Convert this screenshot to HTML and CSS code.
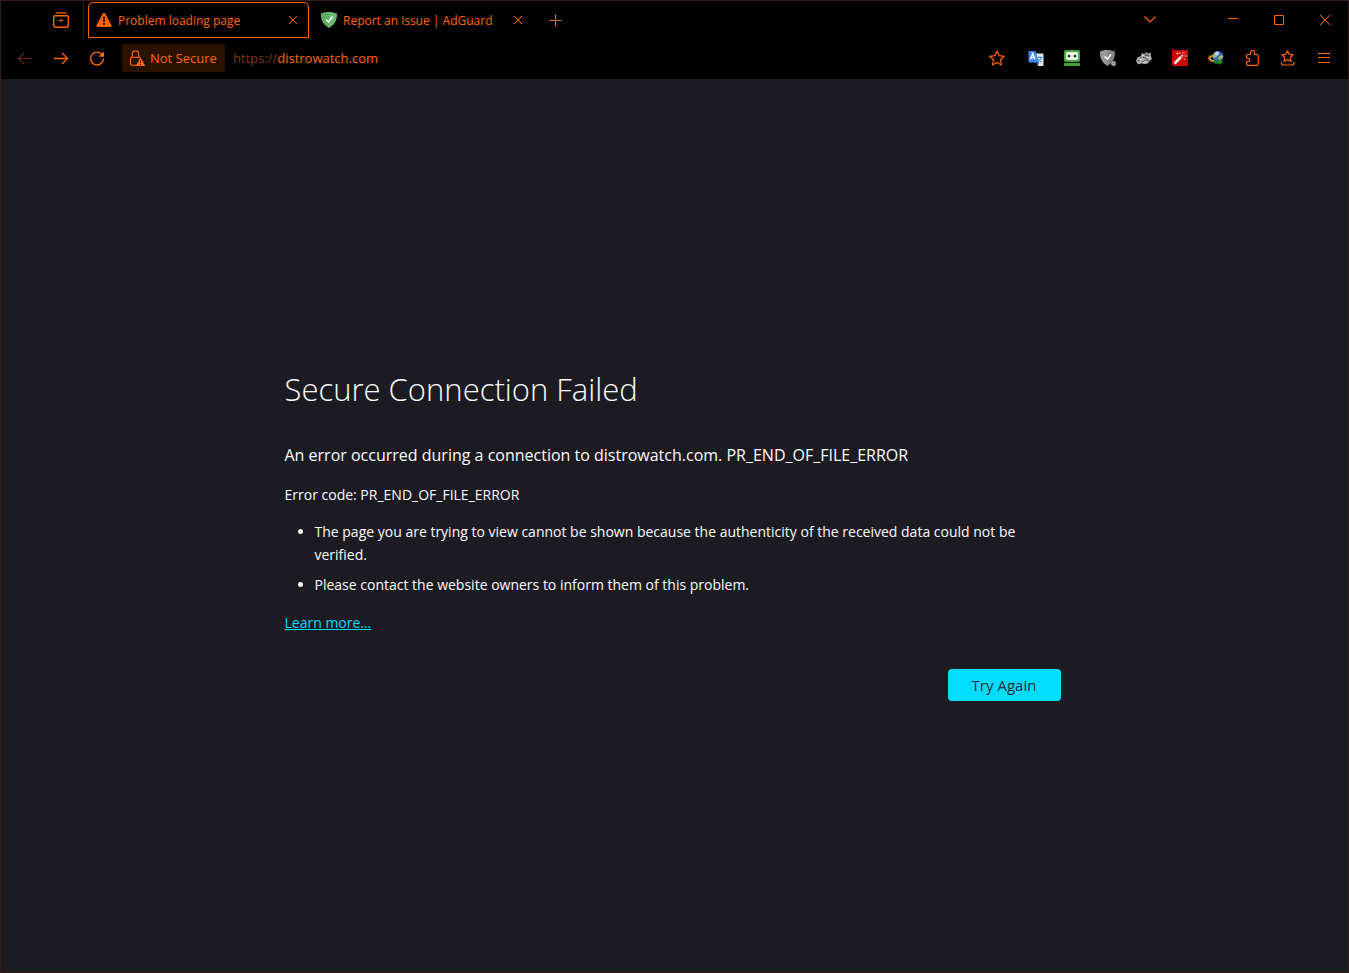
FILE: index.html
```html
<!DOCTYPE html>
<html lang="en">
<head>
    <meta charset="UTF-8">
    <meta name="viewport" content="width=device-width, initial-scale=1.0">
    <title>Problem loading page</title>
    <link rel="stylesheet" href="styles.css">
</head>
<body>
    <div class="window">
        <header class="chrome">
            <!-- Tab strip -->
            <div class="tab-strip">
                <button class="icon-btn view-btn" type="button" aria-label="View recent browsing">
                    <svg width="16" height="16" viewBox="0 0 16 16" fill="none" stroke="currentColor" stroke-linecap="round">
                        <path d="M3 .8h10" stroke-width="1.3"/>
                        <path d="M2 3.8h12q1.3 0 1.3 1.3v8q0 2.2-2.2 2.2H2.9q-2.2 0-2.2-2.2v-8q0-1.3 1.3-1.3z" stroke-width="1.4"/>
                        <path d="M6.5 8.5h3" stroke-width="1.3"/>
                    </svg>
                </button>
                <nav class="tabs" aria-label="Tabs">
                    <div class="tab active">
                        <svg width="16" height="16" viewBox="0 0 16 16">
                            <path d="M8 1q1 0 1.5.9l5.8 11q.5 1 0 1.6-.4.5-1.2.5H1.9q-.8 0-1.2-.5-.5-.6 0-1.6l5.8-11Q7 1 8 1z" fill="#ff6600"/>
                            <path d="M8 5v4.5" stroke="#000" stroke-width="1.5" stroke-linecap="round"/>
                            <circle cx="8" cy="12" r="1" fill="#000"/>
                        </svg>
                        <a class="tab-label" href="#">Problem loading page</a>
                        <button class="tab-close" type="button" aria-label="Close tab">
                            <svg width="10" height="10" viewBox="0 0 10 10" stroke="currentColor"><path d="M1 1l8 8M9 1L1 9"/></svg>
                        </button>
                    </div>
                    <div class="tab">
                        <svg width="16" height="16" viewBox="0 0 16 16">
                            <path d="M8 0C5.5 0 2.5.5 0 1.6 0 4.5 0 11.5 8 16 16 11.5 16 4.5 16 1.6 13.5.5 10.5 0 8 0z" fill="#68bc71"/>
                            <path d="M8 0v16C0 11.5 0 4.5 0 1.6 2.5.5 5.5 0 8 0z" fill="#5cad66"/>
                            <path d="M5 7.5L7.5 10 11.5 4.5" fill="none" stroke="#fff" stroke-width="1.6"/>
                        </svg>
                        <a class="tab-label" href="#">Report an issue | AdGuard</a>
                        <button class="tab-close" type="button" aria-label="Close tab">
                            <svg width="10" height="10" viewBox="0 0 10 10" stroke="currentColor"><path d="M1 1l8 8M9 1L1 9"/></svg>
                        </button>
                    </div>
                </nav>
                <button class="icon-btn" type="button" aria-label="New tab">
                    <svg width="13" height="13" viewBox="0 0 13 13" stroke="currentColor"><path d="M6.5 .5v12M.5 6.5h12"/></svg>
                </button>
                <div class="window-controls">
                    <button class="icon-btn all-tabs" type="button" aria-label="List all tabs">
                        <svg width="14" height="14" viewBox="0 0 14 14" fill="none" stroke="#d95700" stroke-width="1.5"><path d="M1.5 3.500l5.500 5.500L12.500 3.500"/></svg>
                    </button>
                    <button class="win-btn" type="button" aria-label="Minimize">
                        <svg width="10" height="10" viewBox="0 0 10 10" stroke="currentColor"><path d="M0 3.5h10"/></svg>
                    </button>
                    <button class="win-btn" type="button" aria-label="Maximize">
                        <svg width="10" height="10" viewBox="0 0 10 10" fill="none" stroke="currentColor"><path d="M.5.5h9v9h-9z"/></svg>
                    </button>
                    <button class="win-btn" type="button" aria-label="Close">
                        <svg width="10" height="10" viewBox="0 0 10 10" stroke="currentColor"><path d="M0 0l10 10M10 0L0 10"/></svg>
                    </button>
                </div>
            </div>

            <!-- Navigation toolbar -->
            <div class="toolbar">
                <button class="icon-btn" type="button" aria-label="Back" disabled>
                    <svg width="16" height="16" viewBox="0 0 16 16" fill="none" stroke="currentColor" stroke-width="1.2"><path d="M15 8.500H1.500M7 3L1.500 8.500 7 14"/></svg>
                </button>
                <button class="icon-btn" type="button" aria-label="Forward">
                    <svg width="16" height="16" viewBox="0 0 16 16" fill="none" stroke="currentColor" stroke-width="1.3"><path d="M1 8.500h13.500M9 3l5.500 5.500L9 14"/></svg>
                </button>
                <button class="icon-btn" type="button" aria-label="Reload">
                    <svg width="16" height="16" viewBox="0 0 16 16">
                        <path d="M13 4.500A6.400 6.400 0 1 0 14.400 9" fill="none" stroke="currentColor" stroke-width="1.4" stroke-linecap="round"/>
                        <path d="M15 1.200V6q0 .7-.7.7H9.500z" fill="currentColor"/>
                    </svg>
                </button>
                <div class="url-bar">
                    <button class="identity" type="button">
                        <svg width="16" height="16" viewBox="0 0 16 16">
                            <path d="M7.500 15.300H3.200q-1.700 0-1.700-1.700V9q0-1.700 1.700-1.700h6.600q.8 0 1.200.5M3.200 7.300V4.200a3.300 3.300 0 0 1 6.600 0v3.100" fill="none" stroke="currentColor" stroke-width="1.1"/>
                            <path d="M11.500 7.500l4.400 7.700q.2.800-.6.800H7.700q-.8 0-.6-.8z" fill="currentColor"/>
                            <path d="M11.500 10.300v2.700M11.500 14v1" stroke="#2b1100"/>
                        </svg>
                        <span>Not Secure</span>
                    </button>
                    <label class="scheme" for="url">https://</label>
                    <input class="url-input" id="url" type="text" value="distrowatch.com" spellcheck="false">
                    <button class="icon-btn" type="button" aria-label="Bookmark this page">
                        <svg width="16" height="16" viewBox="0 0 16 16" fill="none" stroke="currentColor" stroke-width="1.2" stroke-linejoin="round">
                            <path d="M8 1l2.100 4.700 5.200.6-3.800 3.500 1 5.200L8 12.400 3.500 15l1-5.200L.7 6.300l5.200-.6z"/>
                        </svg>
                    </button>
                </div>
                <div class="extensions">
                    <button class="icon-btn" type="button" aria-label="Translate">
                        <svg width="16" height="16" viewBox="0 0 16 16">
                            <path d="M7 3.500h7.500q1 0 1 1V15q0 1-1 1H10z" fill="#dfe6ee"/>
                            <path d="M9.500 7.500h5M12 6v1.500M13.500 7.500q-1 3-3.500 4.500M10.500 9q1.200 2.500 3.500 3.500" fill="none" stroke="#5285c4"/>
                            <path d="M1 1h6.500l3.500 11.500H1.500q-1 0-1-1V1.500z" fill="#4285f4"/>
                            <path d="M8 12.500h3L9.700 16z" fill="#2456a8"/>
                            <path d="M2.300 9.500L4.700 3.500 7 9.500M3.200 7.500h3" fill="none" stroke="#fff" stroke-width="1.3"/>
                        </svg>
                    </button>
                    <button class="icon-btn" type="button" aria-label="RoboForm">
                        <svg width="16" height="16" viewBox="0 0 16 16">
                            <rect width="16" height="12" rx="2" fill="#42a53b"/>
                            <rect x="2" y="2" width="12" height="8" rx="2" fill="#f5fff2"/>
                            <circle cx="5" cy="6" r="1.5" fill="#173c18"/>
                            <circle cx="11" cy="6" r="1.5" fill="#173c18"/>
                            <rect y="13" width="16" height="3" rx="1" fill="#42a53b"/>
                        </svg>
                    </button>
                    <button class="icon-btn" type="button" aria-label="AdGuard">
                        <svg width="16" height="16" viewBox="0 0 16 16">
                            <path d="M7.500 0C5 0 2.500.5 0 1.600 0 4.500 0 11.500 7.500 16 15 11.500 15 4.500 15 1.600 12.500.5 10 0 7.500 0z" fill="#868686"/>
                            <path d="M7.500 0v16C0 11.500 0 4.500 0 1.600 2.500.5 5 0 7.500 0z" fill="#999"/>
                            <path d="M4.500 6.500L7.500 9 11 4.500" fill="none" stroke="#fff" stroke-width="1.5"/>
                            <circle cx="13.500" cy="13.500" r="2.500" fill="#b0b0b0" stroke="#555" stroke-width=".6"/>
                            <circle cx="13.500" cy="13.500" r=".8" fill="#666"/>
                        </svg>
                    </button>
                    <button class="icon-btn" type="button" aria-label="Privacy Badger">
                        <svg width="16" height="16" viewBox="0 0 16 16">
                            <path d="M0 11l1.500-3.500L5 6l.5-3 3 1L10 2l2.500 1.500 2.500-1-.3 3L16 9l-3 2.500-1 2-3 .5-4-.5-3 1z" fill="#a8a8a8"/>
                            <path d="M4 8l5-3 4 1M1.500 11l6-3.500 5 1.500M6 12l4-2 3 .5M10 3l2 3" fill="none" stroke="#444" stroke-width=".8"/>
                            <path d="M5.500 6.500l3-1.500M3.500 10l3-1.500M11 8l3-.5M7.500 12.500l3-1" stroke="#e8e8e8"/>
                        </svg>
                    </button>
                    <button class="icon-btn" type="button" aria-label="Magic wand">
                        <svg width="16" height="16" viewBox="0 0 16 16">
                            <path d="M0 0h16v16H0z" fill="#cf0000"/>
                            <path d="M2.500 13.500L9 7" stroke="#fff" stroke-width="2.6"/>
                            <path d="M9.500 6.500L11 5" stroke="#ffc9c9" stroke-width="2"/>
                            <path d="M8 2.500v1.500M4.500 3.500h2M5.500 2.500v2M11 2v1.500M13.500 2.500l-1 1M12.500 6h2M12 8.500l1 1.500" stroke="#fff" stroke-width=".9"/>
                        </svg>
                    </button>
                    <button class="icon-btn" type="button" aria-label="Download manager">
                        <svg width="16" height="16" viewBox="0 0 16 16">
                            <path d="M6 4.500Q-.5 6 .8 9 2 11.500 7 12" fill="none" stroke="#e5422f" stroke-width="1.2"/>
                            <path d="M6 5.500Q1 7 2 9q1.500 2 6 2" fill="none" stroke="#f5d747" stroke-width="1.2"/>
                            <circle cx="10" cy="6.500" r="5.500" fill="#2f68b5"/>
                            <path d="M5 5q1-3 4-3.500l1 3-2 3-3 .5zM11 6l3-1 1 2-3 3-2-1z" fill="#9dbb62"/>
                            <circle cx="9" cy="3.500" r="2" fill="#c4dcf5"/>
                            <path d="M4 10.500q3 1.500 6 .5L9 9l6 2.500-3.500 3.500-.5-1.500Q6 14.500 4 10.500z" fill="#129018"/>
                        </svg>
                    </button>
                    <button class="icon-btn" type="button" aria-label="Extensions">
                        <svg width="16" height="16" viewBox="0 0 16 16" fill="none" stroke="currentColor" stroke-width="1.2" stroke-linejoin="round">
                            <path d="M6.500 4.500V2.500a2 2 0 0 1 4 0v2H13q1.200 0 1.200 1.200v8.200q0 1.400-1.400 1.400H3.900q-1.400 0-1.400-1.400V11.500H4a1.500 1.500 0 0 0 0-3.500H2.500V5.700q0-1.200 1.200-1.200z"/>
                        </svg>
                    </button>
                    <button class="icon-btn" type="button" aria-label="Bookmarks menu">
                        <svg width="16" height="16" viewBox="0 0 16 16" fill="none" stroke="currentColor" stroke-width="1.2" stroke-linejoin="round" stroke-linecap="round">
                            <path d="M7.500 .8l1.700 3.500 3.900.5-2.800 2.700.7 3.900-3.500-1.900L4 11.400l.7-3.900-2.800-2.700 3.900-.5z"/>
                            <path d="M1.500 12.500v.500q0 2 2 2h8.500q2 0 2-2v-.500"/>
                        </svg>
                    </button>
                    <button class="icon-btn" type="button" aria-label="Open application menu">
                        <svg width="12" height="12" viewBox="0 0 12 12" stroke="currentColor"><path d="M0 1.500h12M0 5.500h12M0 10.500h12"/></svg>
                    </button>
                </div>
            </div>
        </header>

        <main class="page">
            <div class="error-box">
                <h1>Secure Connection Failed</h1>
                <p class="summary">An error occurred during a connection to distrowatch.com. PR_END_OF_FILE_ERROR</p>
                <p class="code">Error code: PR_END_OF_FILE_ERROR</p>
                <ul>
                    <li>The page you are trying to view cannot be shown because the authenticity of the received data could not be verified.</li>
                    <li>Please contact the website owners to inform them of this problem.</li>
                </ul>
                <p class="learn"><a href="#">Learn more…</a></p>
                <div class="actions">
                    <button class="try-again" type="button">Try Again</button>
                </div>
            </div>
        </main>
    </div>
</body>
</html>
```

FILE: styles.css
```css
* {
    box-sizing: border-box;
}
body {
    margin: 0;
    background-color: #1c1b22;
    color: #fbfbfe;
    font-family: "Open Sans", "Noto Sans", sans-serif;
    font-size: 14px;
}
button,
input {
    padding: 0;
    border: none;
    background: none;
    color: inherit;
    font: inherit;
}
svg {
    display: block;
    flex-shrink: 0;
}
.window {
    display: flex;
    flex-direction: column;
    min-height: 100vh;
    border: 1px solid #3a1a14;
}
.chrome {
    background-color: #000;
    color: #ff6600;
}

/* Tab strip */
.tab-strip {
    display: flex;
    align-items: center;
    height: 38px;
    padding-left: 42px;
}
.icon-btn {
    display: flex;
    justify-content: center;
    align-items: center;
    width: 36px;
    height: 36px;
}
.icon-btn:disabled {
    color: #662900;
}
.tabs {
    display: flex;
    align-self: stretch;
    gap: 4px;
    margin-left: 4px;
    padding: 1px 0 0 4px;
    border-left: 1px solid #3a1a08;
}
.tab {
    display: flex;
    align-items: center;
    gap: 6px;
    width: 221px;
    height: 36px;
    padding: 0 10px 0 7px;
    border: 1px solid transparent;
    font-size: 12px;
}
.tab.active {
    border-color: #ff6600;
    border-radius: 5px 5px 0 0;
}
.tab-label {
    flex: 1;
    color: inherit;
    text-decoration: none;
    white-space: nowrap;
}
.tabs + .icon-btn {
    margin-left: 3px;
}
.window-controls {
    display: flex;
    align-self: stretch;
    align-items: center;
    margin-left: auto;
}
.all-tabs {
    margin-right: 42px;
}
.win-btn {
    display: flex;
    justify-content: center;
    align-items: center;
    width: 46px;
    height: 30px;
}

/* Navigation toolbar */
.toolbar {
    display: flex;
    align-items: center;
    height: 40px;
    padding: 0 6px 2px;
    font-size: 13px;
}
.url-bar {
    display: flex;
    flex: 1;
    align-items: center;
    min-width: 0;
    margin: 0 3px;
    padding-left: 4px;
}
.identity {
    display: flex;
    align-items: center;
    gap: 5px;
    height: 28px;
    margin-right: 8px;
    padding: 0 8px 0 7px;
    border-radius: 3px;
    background-color: #2b1100;
}
.scheme {
    color: #803300;
}
.url-input {
    flex: 1;
    min-width: 0;
    outline: none;
}
.extensions {
    display: flex;
}

/* Error page */
.page {
    display: flex;
    flex: 1;
    justify-content: center;
    align-items: center;
    padding: 35px 20px 20px;
}
.error-box {
    width: 780px;
    max-width: 100%;
    font-size: 14px;
    line-height: 23px;
}
h1 {
    margin: 0 0 30px;
    font-size: 31px;
    font-weight: 300;
    line-height: 48px;
}
.summary {
    margin: 0 0 15px;
    font-size: 16px;
    line-height: 25px;
}
.code {
    margin: 0 0 14px;
}
ul {
    margin: 0 0 15px;
    padding-left: 30px;
}
li {
    margin-bottom: 7px;
}
.learn {
    margin: 0 0 35px;
}
.learn a {
    color: #00ddff;
}
.actions {
    display: flex;
    justify-content: flex-end;
    padding: 0 4px;
}
.try-again {
    min-width: 113px;
    height: 32px;
    border-radius: 4px;
    background-color: #00ddff;
    color: #2b2a33;
    font-size: 15px;
}
```
